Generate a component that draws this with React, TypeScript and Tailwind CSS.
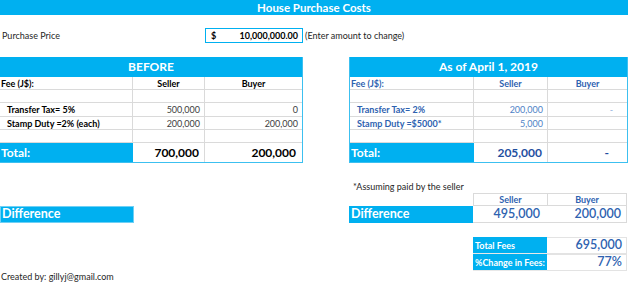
const BLUE = 'bg-[#00b0f0]';

type Row = { label: string; seller: string; buyer: string };

const beforeRows: Row[] = [
  { label: '', seller: '', buyer: '' },
  { label: 'Transfer Tax= 5%', seller: '500,000', buyer: '0' },
  { label: 'Stamp Duty =2% (each)', seller: '200,000', buyer: '200,000' },
  { label: '', seller: '', buyer: '' },
];

const afterRows: Row[] = [
  { label: '', seller: '', buyer: '' },
  { label: 'Transfer Tax= 2%', seller: '200,000', buyer: '-' },
  { label: 'Stamp Duty =$5000*', seller: '5,000', buyer: '' },
  { label: '', seller: '', buyer: '' },
];

interface FeeTableProps {
  title: string;
  rows: Row[];
  totalSeller: string;
  totalBuyer: string;
  widths: [string, string, string];
  blue?: boolean;
}

function FeeTable({ title, rows, totalSeller, totalBuyer, widths, blue = false }: FeeTableProps) {
  const [wa, wb, wc] = widths;
  const headText = blue ? 'text-[#2e62b0]' : 'text-black';
  const valText = blue ? 'text-[#4f82c6]' : 'text-[#404040]';
  const totText = blue ? 'text-[#1f4f9f]' : 'text-black';
  const cell = 'h-full border-r border-b border-[#dadada] flex items-center';

  return (
    <div className={`flex flex-col border-b border-[#3cc0f0] ${blue ? 'border-l border-r' : 'border-r'}`}>
      <div className={`h-[20px] ${BLUE} text-white font-bold text-[12px] flex items-center justify-center`}>
        {title}
      </div>
      <div className={`h-[13px] flex text-[9px] font-bold ${headText}`}>
        <div className={`${wa} ${cell} pl-[1px]`}>Fee (J$):</div>
        <div className={`${wb} ${cell} justify-center`}>Seller</div>
        <div className={`${wc} ${cell} justify-center border-r-0`}>Buyer</div>
      </div>
      {rows.map((r, i) => (
        <div key={i} className={`${i === 1 ? 'h-[14px]' : 'h-[13px]'} flex text-[9px]`}>
          <div className={`${wa} ${cell} pl-[7px] font-bold ${headText}`}>{r.label}</div>
          <div className={`${wb} ${cell} justify-end pr-[4px] ${valText}`}>{r.seller}</div>
          <div
            className={`${wc} ${cell} justify-end border-r-0 ${blue ? 'pr-[14px] text-[#8fb0dc]' : 'pr-[4px] ' + valText}`}
          >
            {r.buyer}
          </div>
        </div>
      ))}
      <div className="h-[19px] flex text-[12px] font-bold">
        <div className={`${wa} h-full ${BLUE} text-white flex items-center pl-[1px]`}>Total:</div>
        <div className={`${wb} ${cell} border-b-0 justify-end pr-[5px] ${totText}`}>{totalSeller}</div>
        <div className={`${wc} h-full flex items-center justify-end ${blue ? 'pr-[18px]' : 'pr-[6px]'} ${totText}`}>
          {totalBuyer}
        </div>
      </div>
    </div>
  );
}

export default function App() {
  return (
    <div className="w-[640px] h-[282px] bg-white overflow-hidden text-black font-['Lato','Liberation_Sans',sans-serif] leading-none">
      {/* title */}
      <div className={`w-[628px] h-[15px] ${BLUE} text-white font-bold text-[11.5px] flex items-center justify-center`}>
        House Purchase Costs
      </div>

      <div className="h-[13px]" />

      {/* purchase price */}
      <div className="h-[15px] flex items-center text-[9px] text-[#262626]">
        <div className="w-[205px] pl-[2px]">Purchase Price</div>
        <div className="w-[98px] h-full border border-[#00b0f0] flex items-center justify-between pl-[5px] pr-[4px] font-bold text-black">
          <span>$</span>
          <span>10,000,000.00</span>
        </div>
        <div className="pl-[2px]">(Enter amount to change)</div>
      </div>

      <div className="h-[14px]" />

      {/* tables */}
      <div className="flex">
        <FeeTable
          title="BEFORE"
          rows={beforeRows}
          totalSeller="700,000"
          totalBuyer="200,000"
          widths={['w-[133px]', 'w-[72px]', 'w-[97px]']}
        />
        <div className="w-[46px]" />
        <FeeTable
          title="As of April 1, 2019"
          rows={afterRows}
          totalSeller="205,000"
          totalBuyer="-"
          widths={['w-[124px]', 'w-[74px]', 'w-[79px]']}
          blue
        />
      </div>

      <div className="h-[17px]" />

      {/* note */}
      <div className="h-[13px] flex items-center text-[9px] pl-[353px] text-[#262626]">*Assuming paid by the seller</div>

      {/* difference header */}
      <div className="h-[13px] flex text-[9px] font-bold text-[#2e62b0]">
        <div className="w-[473px]" />
        <div className="w-[74px] h-full border border-r-0 border-[#dadada] flex items-center justify-center">Seller</div>
        <div className="w-[80px] h-full border border-[#dadada] flex items-center justify-center">Buyer</div>
      </div>

      {/* difference row */}
      <div className="h-[17px] flex text-[12.5px]">
        <div className={`w-[134px] h-full ${BLUE} border border-[#6fd0f5] text-white font-bold flex items-center pl-[1px]`}>
          Difference
        </div>
        <div className="w-[215px]" />
        <div className={`w-[124px] h-full ${BLUE} text-white font-bold flex items-center pl-[2px]`}>Difference</div>
        <div className="w-[74px] h-full border-b border-[#dadada] flex items-center justify-end pr-[7px] text-[#2e62b0] font-semibold">
          495,000
        </div>
        <div className="w-[80px] h-full border-b border-r border-[#dadada] flex items-center justify-end pr-[5px] text-[#2e62b0] font-semibold">
          200,000
        </div>
      </div>

      <div className="h-[14px]" />

      {/* summary */}
      <div className="flex flex-col">
        {[
          ['Total Fees', '695,000'],
          ['%Change in Fees:', '77%'],
        ].map(([k, v]) => (
          <div key={k} className="h-[17px] flex">
            <div className="w-[473px]" />
            <div
              className={`w-[74px] h-full ${BLUE} text-white font-bold text-[9px] whitespace-nowrap flex items-center pl-[2px] border-b border-[#e8e8e8]`}
            >
              {k}
            </div>
            <div className="w-[80px] h-full border-r border-b border-t border-[#e3e3e3] flex items-center justify-end pr-[4px] text-[12.5px] font-semibold text-[#2e62b0]">
              {v}
            </div>
          </div>
        ))}
      </div>

      <div className="h-[11px] flex items-center text-[9px] pl-[1px] text-[#262626]">Created by: gillyj@gmail.com</div>
    </div>
  );
}
